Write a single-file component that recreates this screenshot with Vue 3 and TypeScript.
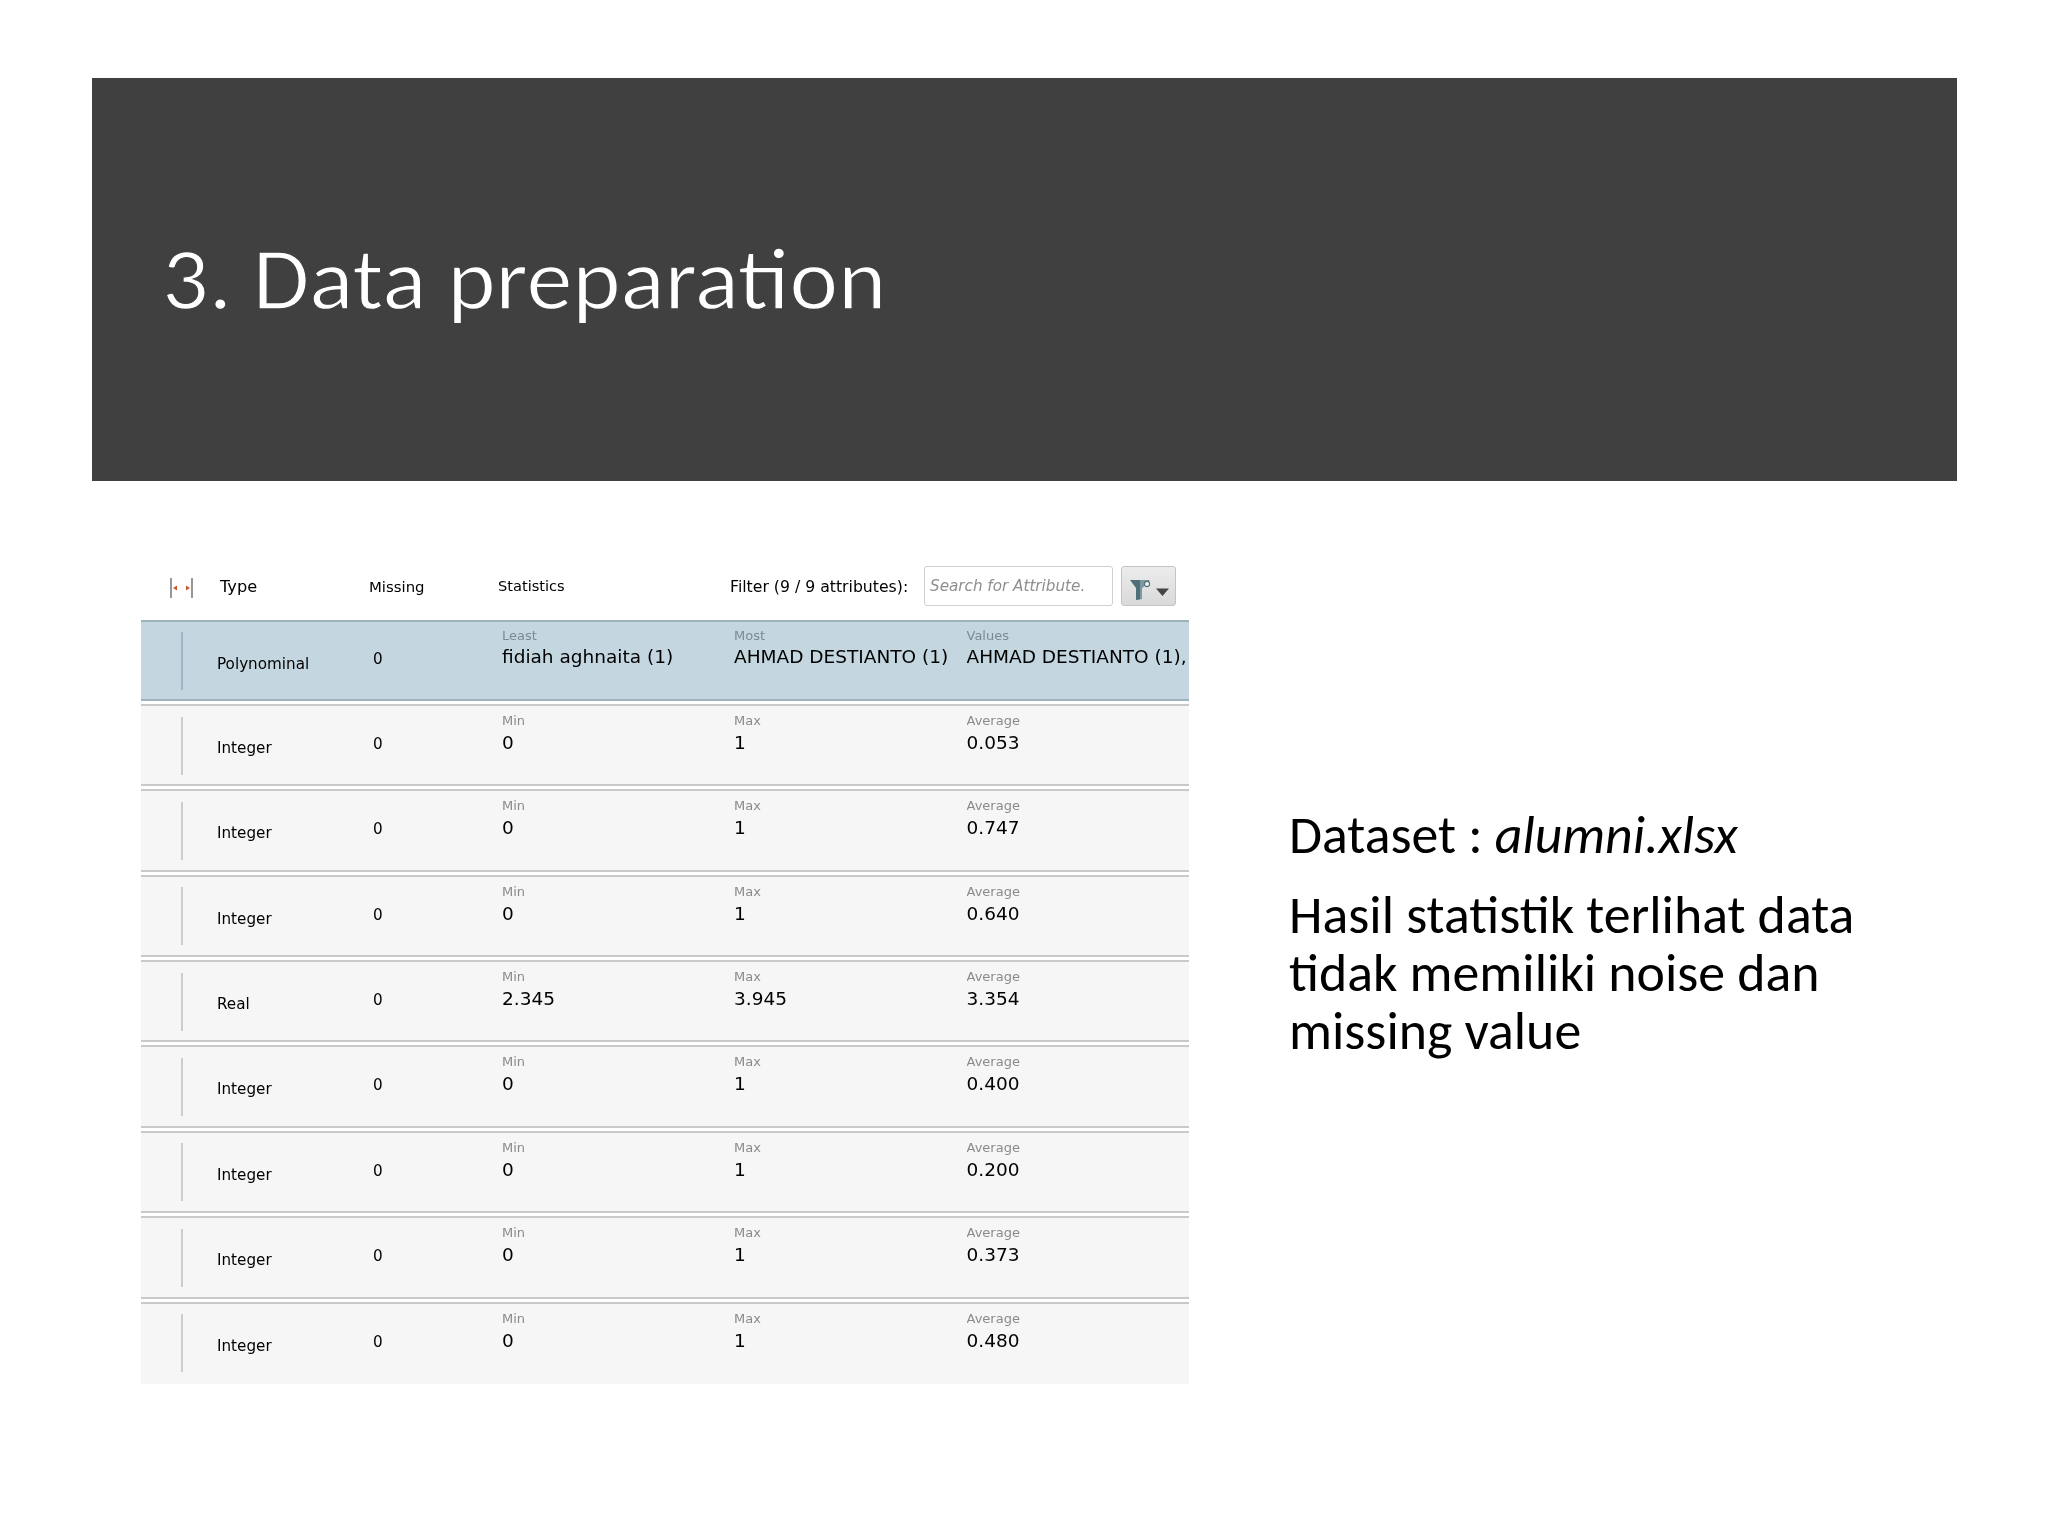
<script setup lang="ts">
interface Row {
  type: string
  labels: [string, string, string]
  values: [string, string, string]
}

const intRow = (avg: string): Row => ({
  type: 'Integer',
  labels: ['Min', 'Max', 'Average'],
  values: ['0', '1', avg],
})

const rows: Row[] = [
  {
    type: 'Polynominal',
    labels: ['Least', 'Most', 'Values'],
    values: ['fidiah aghnaita (1)', 'AHMAD DESTIANTO (1)', 'AHMAD DESTIANTO (1),'],
  },
  intRow('0.053'),
  intRow('0.747'),
  intRow('0.640'),
  { type: 'Real', labels: ['Min', 'Max', 'Average'], values: ['2.345', '3.945', '3.354'] },
  intRow('0.400'),
  intRow('0.200'),
  intRow('0.373'),
  intRow('0.480'),
]
</script>

<template>
  <div class="slide">
    <header class="banner">
      <h1 class="title">3. Data preparation</h1>
    </header>
    <main class="content">
      <section class="panel">
        <div class="toolbar">
          <svg class="resize" width="24" height="22" viewBox="0 0 24 22">
            <path d="M1 1v20M22 1v20" stroke="#7d7d85" stroke-width="1.6" fill="none" />
            <path d="M3 11l4-2.6v5.2zM20 11l-4-2.6v5.2z" fill="#c9582f" />
          </svg>
          <span class="head type-head">Type</span>
          <span class="head">Missing</span>
          <span class="head stats-head">Statistics</span>
          <span class="head filter-head">Filter (9 / 9 attributes):</span>
          <div class="search">Search for Attribute.</div>
          <button class="funnel" type="button">
            <svg width="40" height="24" viewBox="0 0 40 24">
              <path d="M0 3h10v19.5l-4 .5V11z" fill="#4f7079" />
              <path d="M10 3h10l-8 8.5V22l-2 .5z" fill="#7d989f" />
              <circle cx="17" cy="7" r="2.6" fill="#f2f2f2" stroke="#4f7079" stroke-width="1.1" />
              <path d="M26 11.5h13l-6.5 7.5z" fill="#454545" />
            </svg>
          </button>
        </div>
        <div v-for="(row, i) in rows" :key="i" class="row" :class="{ selected: i === 0, last: i === rows.length - 1 }">
          <span class="bar"></span>
          <span class="type">{{ row.type }}</span>
          <span class="missing">0</span>
          <div v-for="(label, j) in row.labels" :key="label" class="stat">
            <span class="label">{{ label }}</span>
            <span class="value">{{ row.values[j] }}</span>
          </div>
        </div>
      </section>
      <aside class="notes">
        <p>Dataset : <em>alumni.xlsx</em></p>
        <p>Hasil statistik terlihat data tidak memiliki noise dan missing value</p>
      </aside>
    </main>
  </div>
</template>

<style>
html, body { margin: 0; background: #fff; }
</style>

<style scoped>
.slide {
  width: 2048px;
  height: 1536px;
  box-sizing: border-box;
  padding-top: 77.5px;
  background: #fff;
  overflow: hidden;
  font-family: Carlito, Lato, sans-serif;
}
.banner {
  margin: 0 91px 0 92px;
  height: 403.5px;
  background: #404040;
  display: flex;
  align-items: center;
  padding-left: 70px;
}
.title {
  margin: 0;
  color: #fff;
  font-size: 88px;
  font-weight: 400;
  line-height: 1;
  font-variant-ligatures: common-ligatures;
  transform: scaleX(1.046);
  transform-origin: left center;
  -webkit-text-stroke: 1.3px #404040;
}
.content {
  display: flex;
  margin-top: 84.5px;
  padding-left: 141px;
}
.panel {
  width: 1048px;
  flex: none;
  font-family: "DejaVu Sans", sans-serif;
  color: #000;
  filter: blur(0.3px);
}
.toolbar {
  height: 54px;
  box-sizing: border-box;
  padding-left: 29px;
  display: grid;
  grid-template-columns: 49px 150px 129px 232px 194px 197px 55px;
  align-items: start;
}
.resize { margin-top: 11px; }
.head { font-size: 14.9px; line-height: 20px; margin-top: 11px; white-space: nowrap; }
.type-head { font-size: 16.2px; margin-left: 1px; }
.stats-head { margin-top: 10px; font-size: 14.6px; }
.filter-head { font-size: 15.7px; }
.search {
  width: 189px;
  height: 40px;
  box-sizing: border-box;
  border: 1.5px solid #cfcfcf;
  border-radius: 3px;
  padding-left: 5px;
  font-size: 15.2px;
  line-height: 39px;
  font-style: italic;
  color: #8f8f8f;
  white-space: nowrap;
  overflow: hidden;
}
.funnel {
  width: 55px;
  height: 40px;
  padding: 6px 0 0 8px;
  border: 1.5px solid #c4c4c4;
  border-radius: 3px;
  background: linear-gradient(#ececec, #d9d9d9);
  box-sizing: border-box;
  text-align: left;
}
.funnel svg { display: block; }
.row {
  height: 82.35px;
  margin-bottom: 3px;
  box-sizing: border-box;
  padding-left: 40px;
  border-top: 2px solid #c9c9c9;
  border-bottom: 2px solid #c9c9c9;
  background: #f6f6f6;
  display: grid;
  grid-template-columns: 36px 156px 129px 232px 232.5px minmax(0, 1fr);
  overflow: hidden;
}
.row.selected {
  height: 81px;
  margin-bottom: 3.6px;
  background: #c4d7e0;
  border-color: #9cb2bc;
}
.row.last { border-bottom: 0; }
.bar {
  width: 2px;
  height: 58px;
  margin-top: 10.5px;
  background: #cdcdcd;
}
.selected .bar { background: #9fb4be; }
.type {
  font-size: 15.2px;
  line-height: 20px;
  margin-top: 32px;
  white-space: nowrap;
}
.missing {
  font-size: 15.2px;
  line-height: 20px;
  margin-top: 28px;
}
.selected .missing { margin-top: 27px; }
.stat {
  display: flex;
  flex-direction: column;
  white-space: nowrap;
  overflow: hidden;
}
.label {
  font-size: 13px;
  line-height: 16px;
  margin-top: 7px;
  color: #8a8a8a;
}
.selected .label { color: #7c8a91; margin-top: 6px; }
.value {
  font-size: 18.5px;
  line-height: 24px;
  margin-top: 2px;
  color: #000;
}
.selected .value { margin-top: 1px; }
.notes {
  margin-left: 100px;
  width: 600px;
  padding-top: 240px;
  font-size: 53.8px;
  line-height: 58.3px;
  color: #000;
  font-variant-ligatures: common-ligatures;
}
.notes p { margin: 0 0 22px; }
</style>
